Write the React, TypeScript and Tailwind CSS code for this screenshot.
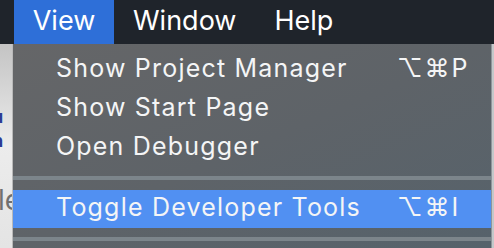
import React from 'react';

const font = { fontFamily: 'Inter, "DejaVu Sans", sans-serif' };

const items: Array<{ label: string; shortcut?: string; active?: boolean }> = [
  { label: 'Show Project Manager', shortcut: '⌥⌘P' },
  { label: 'Show Start Page' },
  { label: 'Open Debugger' },
];

function MenuRow({ label, shortcut, active }: { label: string; shortcut?: string; active?: boolean }) {
  return (
    <div
      className={`flex items-center text-[25px] tracking-[1.2px] text-[#f4f5f6] ${
        active ? 'h-[38px] bg-[#5190f2] pb-[3px]' : 'h-[39px]'
      }`}
    >
      <span className="w-[384px] pl-[43px]">{label}</span>
      {shortcut && <span className="tracking-[2px]">{shortcut}</span>}
    </div>
  );
}

export default function App() {
  return (
    <div className="flex h-[248px] w-[494px] flex-col overflow-hidden bg-[#e6e6e6]" style={font}>
      <div className="flex h-[44px] shrink-0 items-stretch bg-[#1f242b] pl-[14px] text-[27px] text-white">
        <div className="flex w-[100px] items-center justify-center bg-[#2e6fd8] pb-[2px]">View</div>
        <div className="flex items-center pb-[2px] pl-[19px]">Window</div>
        <div className="flex items-center pb-[2px] pl-[38px]">Help</div>
      </div>
      <div className="flex flex-1">
        <div className="flex w-[13px] flex-col overflow-hidden border-r border-[#b9b9b9] bg-gradient-to-b from-[#c4c4c4] via-[#ececec] to-[#e4e4e4] pt-[64px] leading-none">
          <span className="-ml-[8px] text-[18px] font-bold text-[#2d3a93]">u</span>
          <span className="-ml-[8px] mt-[6px] text-[18px] font-bold text-[#2d3a93]">n</span>
          <span className="-ml-[2px] mt-[36px] text-[28px] text-[#707070]">le</span>
        </div>
        <div className="flex flex-1 flex-col bg-gradient-to-br from-[#656668] via-[#5e6368] to-[#56626b] pt-[5px]">
          {items.map((item) => (
            <MenuRow key={item.label} {...item} />
          ))}
          <div className="flex h-[24px] items-center">
            <div className="h-[4px] w-full bg-[#7c858b]" />
          </div>
          <MenuRow label="Toggle Developer Tools" shortcut="⌥⌘I" active />
          <div className="mt-[9px] h-[4px] bg-[#7c858b]" />
        </div>
        <div className="w-[3px] border-l border-[#8e969b] bg-[#c4c8ca]" />
      </div>
    </div>
  );
}
